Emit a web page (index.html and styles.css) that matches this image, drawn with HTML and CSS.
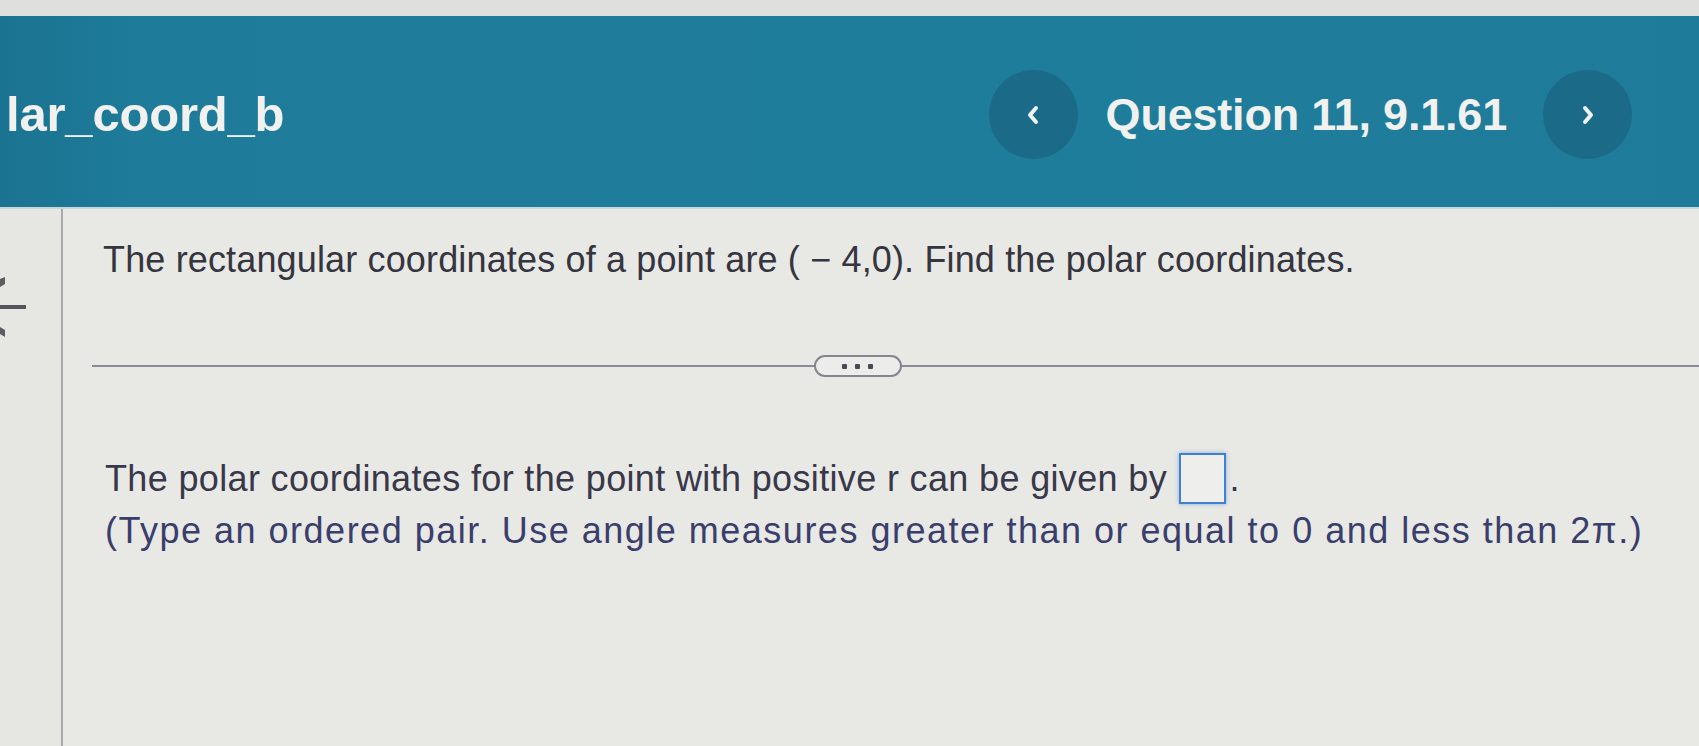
FILE: index.html
```html
<!DOCTYPE html>
<html lang="en">
<head>
<meta charset="utf-8">
<title>Question 11, 9.1.61</title>
<link rel="stylesheet" href="styles.css">
</head>
<body>
<div class="topstrip"></div>
<header class="header">
  <div class="title">lar_coord_b</div>
  <nav class="qnav">
    <button class="navbtn" aria-label="Previous question">
      <svg width="16" height="24" viewBox="0 0 16 24"><path d="M11 5 L5 12 L11 19" fill="none" stroke="#f2f2f2" stroke-width="4" stroke-linecap="round" stroke-linejoin="round"/></svg>
    </button>
    <span class="qtitle">Question 11, 9.1.61</span>
    <button class="navbtn" aria-label="Next question">
      <svg width="16" height="24" viewBox="0 0 16 24"><path d="M5 5 L11 12 L5 19" fill="none" stroke="#f2f2f2" stroke-width="4" stroke-linecap="round" stroke-linejoin="round"/></svg>
    </button>
  </nav>
</header>
<main class="main">
  <aside class="side">
    <svg class="sidemark" width="28" height="62" viewBox="0 0 28 62">
      <path d="M0 2 L5 0 L5 7 L0 10 Z" fill="#5c5c62"/>
      <rect x="0" y="28" width="26" height="4" fill="#55555c"/>
      <path d="M0 50 L5 53 L5 60 L0 57 Z" fill="#5c5c62"/>
    </svg>
  </aside>
  <section class="content">
    <p class="question">The rectangular coordinates of a point are ( &minus; 4,0). Find the polar coordinates.</p>
    <div class="divider">
      <span class="pill"><i></i><i></i><i></i></span>
    </div>
    <p class="answer">The polar coordinates for the point with positive r can be given by <span class="box"></span>.</p>
    <p class="hint">(Type an ordered pair. Use angle measures greater than or equal to 0 and less than 2&pi;.)</p>
  </section>
</main>
</body>
</html>
```

FILE: styles.css
```css
html, body {
  margin: 0;
  padding: 0;
}

body {
  width: 1699px;
  height: 746px;
  overflow: hidden;
  background: #e8e8e5;
  font-family: "Liberation Sans", Arial, sans-serif;
}

.topstrip {
  height: 16px;
  background: #dfdfdd;
}

.header {
  height: 193px;
  box-sizing: border-box;
  background: linear-gradient(90deg, #1a7391 0%, #1e7b9a 8%, #1f7d9c 60%, #1f7b9a 100%);
  border-bottom: 2px solid #c9d7da;
  display: flex;
  align-items: center;
  padding-top: 6px;
}

.title {
  flex: 1;
  padding-left: 6px;
  color: #f1f1f0;
  font-weight: bold;
  font-size: 49px;
  line-height: 1;
  letter-spacing: -0.2px;
}

.qnav {
  display: flex;
  align-items: center;
  margin-right: 67px;
}

.navbtn {
  width: 89px;
  height: 89px;
  border: none;
  border-radius: 50%;
  background: #1a6a88;
  display: flex;
  align-items: center;
  justify-content: center;
  padding: 0;
}

.qtitle {
  color: #f1f1f0;
  font-weight: bold;
  font-size: 45px;
  line-height: 1;
  margin: 0 36px 0 28px;
  letter-spacing: -0.2px;
}

.main {
  display: flex;
  height: 537px;
}

.side {
  width: 63px;
  flex: none;
  border-right: 2px solid #a9a9ab;
  background: #e6e6e3;
  box-sizing: border-box;
}

.sidemark {
  display: block;
  margin-top: 68px;
}

.content {
  flex: 1;
  padding-top: 30px;
  color: #35353f;
}

.content p {
  margin: 0;
  font-size: 36px;
}

.question {
  padding-left: 40px;
  line-height: 42px;
  letter-spacing: 0.15px;
}

.divider {
  margin: 74px 0 0 29px;
  height: 22px;
  display: flex;
  align-items: center;
  justify-content: center;
  background: linear-gradient(#8b8b96, #8b8b96) 0 50% / 100% 2px no-repeat;
  padding-right: 76px;
}

.pill {
  width: 84px;
  height: 18px;
  border: 2px solid #85858f;
  border-radius: 11px;
  background: #ececea;
  display: flex;
  align-items: center;
  justify-content: center;
  gap: 8px;
}

.pill i {
  width: 5px;
  height: 5px;
  background: #4a4a55;
  border-radius: 1px;
}

.answer {
  margin-top: 76px !important;
  padding-left: 42px;
  line-height: 52px;
  letter-spacing: 0.35px;
  color: #38384a;
}

.box {
  display: inline-block;
  vertical-align: top;
  width: 43px;
  height: 47px;
  border: 2px solid #3f80cf;
  box-shadow: 0 0 4px rgba(70, 130, 220, 0.6);
  background: #eeeeec;
  margin-left: 2px;
  margin-right: 3px;
}

.hint {
  padding-left: 42px;
  line-height: 52px;
  letter-spacing: 1.5px;
  color: #3a3e6c;
}
```
